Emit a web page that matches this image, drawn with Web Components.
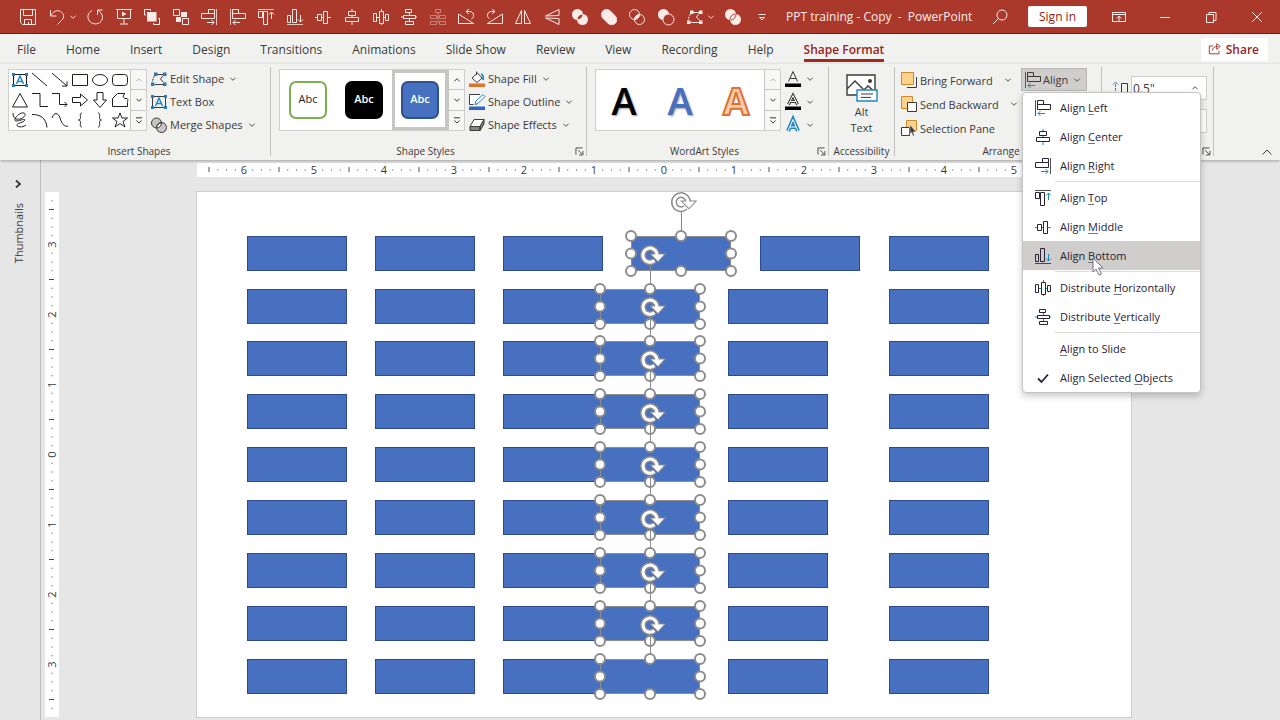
<!DOCTYPE html>
<html lang="en">
<head>
<meta charset="utf-8">
<title>PPT training - Copy - PowerPoint</title>
<style>
    body {
        margin: 0;
        height: 100vh;
        overflow: hidden;
        font-family: "Open Sans", "Noto Sans", sans-serif;
        font-size: 12px;
        color: #3b3a39;
        background: #e6e6e6;
    }
</style>
</head>
<body>
<ppt-app></ppt-app>

<script>
const BASE = `
    * { box-sizing: border-box; }
    button {
        display: flex;
        align-items: center;
        margin: 0;
        padding: 0;
        border: 0;
        background: none;
        font: inherit;
        color: inherit;
        white-space: nowrap;
    }
`;

class BaseElement extends HTMLElement {
    constructor() {
        super();
        this.shadow = this.attachShadow({mode: 'open'});
    }
    connectedCallback() {
        this.shadow.innerHTML = `<style>${BASE}</style>` + this.render();
    }
}

// all icons sit on a 16 x 16 grid, "a" is the accent colour class
const ICONS = {
    save: '<path d="M.5 .5h15v15h-13l-2-2zM3.500 .5v6h9v-6M4.500 15.500v-5h7v5M8.500 13v2"/>',
    undo: '<path d="M1.500 1v6h6M1.500 7C4 2.500 8 .5 11.500 2.500c4 2.500 4 6 1 9L8.500 15.500"/>',
    redo: '<path d="M5 1.500C0 4 -.5 10.500 4 13.500s11 1 11.500-5C15.500 5 13.500 3 11 1.500M15.500 1h-5v5"/>',
    present: '<path d="M0 .5h16M1.500 .5v9h13v-9M8 9.500v5M4 15h8"/><path class="f" d="M6 2.500v5L10.500 5z"/>',
    forward: '<path class="f" d="M3 3h9.500v9.500H3z"/><path d="M2 6H.5V.5h6V2M14 9.500h1.500v6h-6V14"/>',
    group: '<path d="M.5 .5h6v6h-6zM9.500 9.500h6v6h-6z"/><path class="f" d="M8 3h6v5H8zM3 8h5v5H3z"/>',
    alignLeft: '<path class="s" d="M.5 0v16"/><path d="M2.500 .5h6v4h-6zM2.500 4.500h13v5h-13z"/><path class="a" d="M3 13.500h7M5.500 11l-2.500 2.500L5.500 16"/>',
    alignRight: '<path class="s" d="M15.500 0v16"/><path d="M7.500 .5h6v4h-6zM.5 4.500h13v5H.5z"/><path class="a" d="M13 13.500H6M10.500 11l2.500 2.500-2.500 2.500"/>',
    alignTop: '<path class="s" d="M0 .5h16"/><path d="M.5 2.500h4v6h-4zM5.500 2.500h4v13h-4z"/><path class="a" d="M13.500 10V3M11 5.500l2.500-2.500L16 5.500"/>',
    alignBottom: '<path class="s" d="M0 15.500h16"/><path d="M.5 6.500h3v7h-3zM5.500 .5h4v13h-4z"/><path class="a" d="M13.500 6v7M11 10.500l2.500 2.500 2.500-2.500"/>',
    alignMiddle: '<path d="M2.500 5.500h4v6h-4zM8.500 2.500h4v12h-4z"/><path class="a" d="M0 8.500h2M7 8.500h1M13 8.500h3"/>',
    alignCenter: '<path d="M4.500 2.500h7v4h-7zM1.500 8.500h13v4h-13z"/><path class="a" d="M8 0v2M8 7v1M8 13v3"/>',
    distH: '<path d="M.5 4.500h3v8h-3zM6.500 2.500h4v12h-4zM12.500 5.500h3v6h-3z"/><path class="a" d="M4 8.500h2M11 8.500h1M8.500 0v2M8.500 15v1"/>',
    distV: '<path d="M4.500 .5h6v3h-6zM2.500 6.500h12v3h-12zM4.500 12.500h8v3h-8z"/><path class="a" d="M8.500 4v2M8.500 10v2M0 8h2M15 8h1"/>',
    org: '<g opacity=".4"><path d="M5.500 .5h5v3h-5zM.5 6.500h6v3h-6zM9.500 6.500h6v3h-6zM.5 12.500h6v3h-6zM9.500 12.500h6v3h-6zM8 4v10M7 8h2"/></g>',
    rotLeft: '<path d="M.5 5v9.500h15zM11 0L8 2.500 11 5M8 2.500h3.500c3 0 4 2 4 4s-1 3-2 3.500"/>',
    rotRight: '<path d="M15.500 5v9.500H.5zM5 0l3 2.500L5 5M8 2.500H4.500C1.500 2.500 .5 4.500 .5 6.500S1.500 9 2.500 9.500"/>',
    flipH: '<path d="M6.500 1.500v13h-6zM9.500 1.500v13h6z"/>',
    flipV: '<path d="M15 .5v6L1.500 7zM15 15.500v-6L1.500 9z"/>',
    intersect: '<circle class="f" cx="5.500" cy="5.500" r="5.500"/><circle class="f" cx="10.500" cy="10.500" r="5.500"/><path style="fill:#ab392b;stroke:none" d="M5.500 10.500a5 5 0 0 1 5-5 5 5 0 0 1-5 5z"/>',
    union: '<path class="f" d="M9.500 1.700a5.500 5.500 0 1 0-7.800 7.800l5 5a5.500 5.500 0 1 0 7.800-7.800z"/>',
    combine: '<circle cx="5.500" cy="5.500" r="5"/><circle cx="10.500" cy="10.500" r="5"/><path class="f" d="M5.500 10.500a5 5 0 0 1 5-5 5 5 0 0 1-5 5z"/>',
    subtract: '<circle class="f" cx="5.500" cy="5.500" r="5.500"/><circle cx="10.500" cy="10.500" r="5.500" style="fill:#ab392b"/>',
    fragment: '<circle class="f" cx="5.500" cy="5.500" r="5.500"/><circle class="f" cx="10.500" cy="10.500" r="5.500"/><path style="stroke:#ab392b" d="M5 10.500a5.500 5.500 0 0 1 5.500-5.500M11 5.500A5.500 5.500 0 0 1 5.500 11"/>',
    editPoints: '<path d="M6 3.500h6M12 4.500L9.500 8l3 3.500M4 13.500h8" /><path d="M3.500 5C2 7 1.500 9 1.500 11" stroke-dasharray="2 1"/><path class="af" d="M3 1.500h3.500V5H3zM12 1.500h3.500V5H12zM0 11.500h3.500V15H0zM12 11.500h3.500V15H12z"/>',
    more: '<path d="M4.500 5.500h7M5.500 8.500h5L8 11z"/>',
    search: '<circle cx="10" cy="6" r="5"/><path d="M6.500 9.500L1 15"/>',
    ribbonMode: '<path d="M1.500 3.500h13v9h-13zM1.500 5.500h13M8 12V7M5.500 9.500L8 7l2.500 2.500"/>',
    minimize: '<path d="M3 8.500h10"/>',
    restore: '<path d="M3.500 5.500h7v8h-7zM6 5.500v-2h7v8h-2.500"/>',
    close: '<path d="M3 3l10 10M13 3L3 13"/>',
    share: '<path d="M6 4.500H1.500v9h11V10M5 10c.5-3.500 2.500-5 6-5M10 2l4 3-4 3.500z"/>',
    down: '<path d="M5 6.500l3 3 3-3"/>',
    up: '<path d="M5 9.500l3-3 3 3"/>',
    expand: '<path d="M4.500 5.500h7M5 8.500l3 3 3-3"/>',
    collapse: '<path d="M3.500 10.500l4.500-4.500 4.500 4.500"/>',
    pane: '<path d="M6 4.500l4 3.500-4 3.500" stroke-width="1.800"/>',
    launch: '<path d="M4.500 12V4.500H12M7 7l5 5M12.500 8v4.500H8"/>',
    check: '<path d="M3 8.500l3.500 3.500L13 4.500" stroke-width="1.800"/>',
    none: '',
    textBox: '<path d="M1.500 2.500h13v11h-13z"/><path class="a" d="M4.500 12L8 4l3.500 8M5.800 9.500h4.400" stroke-width="1.400"/><path class="af" d="M0 1h3v3H0zM13 1h3v3h-3zM0 12h3v3H0zM13 12h3v3h-3z"/>',
    line: '<path d="M0 1l15 13"/>',
    arrowLine: '<path d="M0 1l15 13M15 9.500V14h-5"/>',
    rect: '<path d="M.5 2.500h15v11H.5z"/>',
    oval: '<ellipse cx="8" cy="8" rx="7.500" ry="5.500"/>',
    round: '<rect x=".5" y="2.500" width="15" height="11" rx="3"/>',
    triangle: '<path d="M8 1.500L15.500 15H.5z"/>',
    elbow: '<path d="M0 1.500h8v13h8"/>',
    elbowArrow: '<path d="M0 1.500h7.500v11H15M12.500 10l2.500 2.500-2.500 2.500"/>',
    arrowRight: '<path d="M.5 5.500h8v-3.500L15.500 8l-7 6v-3.500h-8z"/>',
    arrowDown: '<path d="M5 .5h6v7.500h3.500L8 15.500 1.500 8H5z"/>',
    freeform: '<path d="M5.500 1.500H13c-3 2-2 5 1 5s1.500 2 1.500 4v4h-15v-8z"/>',
    scribble: '<path d="M1 1c0 5 3 7 7 6s7-5 4-6-8 3-9 6 3 2 6 1 5-1 3 1-7 2-7 4 5 3 9 0"/>',
    arc: '<path d="M0 2.500c8 0 14 3 15 13"/>',
    curve: '<path d="M0 6c2-6 6-6 8 0s4 9 8 8"/>',
    braceL: '<path d="M10 1C7.500 1 8.500 4 8.500 5.500S8 8 6.500 8C8 8 8.500 9 8.500 10.500S7.500 15 10 15"/>',
    braceR: '<path d="M6 1c2.500 0 1.500 3 1.500 4.500S8 8 9.500 8C8 8 7.500 9 7.500 10.500S8.500 15 6 15"/>',
    star: '<path d="M8 1l2 5h5.500L11 9.500l2 5.500-5-3.500L3 15l2-5.500L.5 6H6z"/>',
    merge: '<circle cx="5.500" cy="6" r="5" style="fill:#c8c6c4"/><circle cx="10.500" cy="10.500" r="5" style="fill:#c8c6c4"/><path style="fill:#f1f1f0" d="M5.500 11a5 5 0 0 1 5-5 5 5 0 0 1-5 5z"/>',
    fill: '<path style="fill:#dd7230;stroke:none" d="M0 12.500h16V16H0z"/><path style="fill:#fff" d="M3 7l5.500-5 4.500 5-5 4.500zM7.500 4V.5"/><path class="a" d="M12 3c2 .5 2.500 3 2 6" stroke-width="1.800"/>',
    outline: '<path style="fill:#2f66c4;stroke:none" d="M0 12.500h16V16H0z"/><path style="fill:#fff" d="M11 .5H.5v10h4"/><path class="a" d="M14 .5l2 2-7 7-3 1 1-3.500z" style="fill:#fff"/>',
    effects: '<path style="fill:#fff" d="M5 2.500h10L11 9.500H1z"/><path style="fill:#8a8886" d="M1 9.500h10v4H1zM11 9.500l4-7v4.500l-4 6.500z"/>',
    bringFwd: '<path d="M6 15.500h9.500V5"/><path style="fill:#fcd189;stroke:#d08a2e" d="M.5 .5h12v12H.5z"/>',
    sendBack: '<path style="fill:#fcd189;stroke:#d08a2e" d="M.5 .5h11v12H.5z"/><path style="fill:#fff" d="M6.500 6.500h9v9h-9z"/>',
    selPane: '<path style="fill:#fcd189;stroke:#d08a2e" d="M5.500 .5h10v10h-10z"/><path style="fill:#fff" d="M.5 7.500h8v8h-8z"/><path style="fill:#3b3a39;stroke:#fff;stroke-width:.5" d="M9 4.500l6 7.500h-3l1.500 3.500-1.500 .5-1.500-3.500L9 14z"/>',
    height: '<path class="a" d="M3.500 15V2M1 4.500L3.500 2 6 4.500" stroke-dasharray="3 1"/><path d="M9.500 3.500h6V16h-6z"/>',
    textFill: '<path d="M3.500 10.500L8 .5l4.500 10M5 7.500h6"/><path class="k" d="M0 12.500h16V16H0z"/>',
    textOutline: '<path d="M3.500 10.500L8 1.500l4.500 9M5.500 7.500h5" stroke-width="3"/><path d="M3.500 10.500L8 1.500l4.500 9M5.500 7.500h5" style="stroke:#fff"/><path class="k" d="M0 12.500h16V16H0z"/>',
    textEffects: '<path class="a" d="M3 14L8 2.500 13 14M5 10h6" stroke-width="4"/><path d="M3 14L8 2.500 13 14M5 10h6" style="stroke:#fff"/>',
    altText: '<path style="fill:#fff" stroke-width=".7" d="M.5 1.500h14v10H.5zM.5 8.500l4-4 4.500 4.500 2-2 3.500 3"/><circle cx="12" cy="4.500" r=".5"/><path class="a" style="fill:#fff" stroke-width=".7" d="M5.500 9h10v5.500h-10z"/><path d="M7.500 11h6M7.500 12.700h5" stroke-width=".5"/>'
};

class UiIcon extends BaseElement {
    render() {
        const size = this.getAttribute('size') || 16;
        return `
        <style>
        :host { display: inline-flex; flex: none; }
        svg { fill: none; stroke: currentColor; overflow: visible; }
        .a { stroke: var(--accent, #1f86c4); }
        .s { opacity: .8; }
        .f { fill: currentColor; stroke: none; }
        .af { fill: var(--accent, #2a7ab5); stroke: none; }
        .k { fill: #000; stroke: none; }
        </style>
        <svg width="${size}" height="${size}" viewBox="0 0 16 16" aria-hidden="true">${ICONS[this.getAttribute('name')]}</svg>
        `;
    }
}
customElements.define('ui-icon', UiIcon);

class TitleBar extends BaseElement {
    render() {
        const tools = ['save', 'undo', 'redo', 'present', 'forward', 'group', 'alignRight', 'alignLeft', 'alignTop',
            'alignBottom', 'alignMiddle', 'alignCenter', 'distH', 'distV', 'org', 'rotLeft', 'rotRight', 'flipH',
            'flipV', 'intersect', 'union', 'combine', 'subtract', 'editPoints', 'fragment', 'more'];
        const menus = ['undo', 'editPoints'];
        return `
        <style>
        :host {
            display: flex;
            align-items: center;
            height: 34px;
            background: #ab392b;
            border-bottom: 1px solid #86190f;
            color: #fdebe8;
            --accent: currentColor;
        }
        .tools {
            display: flex;
            justify-content: space-between;
            width: 750px;
            margin-left: 20px;
        }
        .drop { margin: 0 -5px 0 1px; }
        .title { margin-left: 16px; white-space: pre; font-size: 12px; }
        .right { display: flex; align-items: center; margin-left: auto; gap: 30px; padding-right: 15px; }
        .sign {
            padding: 0 11px;
            margin: 0 -6px 0 -10px;
            height: 21px;
            border-radius: 2px;
            background: #fff;
            color: #8c1f14;
        }
        </style>
        <div class="tools">
            ${tools.map(t => `<button aria-label="${t}"><ui-icon name="${t}"></ui-icon>${menus.includes(t) ? '<ui-icon class="drop" name="down" size="14"></ui-icon>' : ''}</button>`).join('')}
        </div>
        <div class="title">PPT training - Copy  -  PowerPoint</div>
        <div class="right">
            <button aria-label="Search"><ui-icon name="search"></ui-icon></button>
            <button class="sign">Sign in</button>
            <button aria-label="Ribbon display"><ui-icon name="ribbonMode"></ui-icon></button>
            <button aria-label="Minimize"><ui-icon name="minimize"></ui-icon></button>
            <button aria-label="Restore"><ui-icon name="restore"></ui-icon></button>
            <button aria-label="Close"><ui-icon name="close"></ui-icon></button>
        </div>
        `;
    }
}
customElements.define('title-bar', TitleBar);

class TabStrip extends BaseElement {
    render() {
        const tabs = ['File', 'Home', 'Insert', 'Design', 'Transitions', 'Animations', 'Slide Show', 'Review', 'View',
            'Recording', 'Help', 'Shape Format'];
        return `
        <style>
        :host {
            display: flex;
            align-items: center;
            height: 30px;
            padding: 0 12px 0 17px;
            background: #f1f1f0;
        }
        nav { display: flex; gap: 30px; }
        nav button { height: 22px; margin-top: 3px; border-bottom: 3px solid transparent; }
        nav .on { color: #99241a; border-color: #a4261d; font-weight: 600; }
        .share {
            margin-left: auto;
            gap: 4px;
            height: 23px;
            padding: 0 9px 0 7px;
            background: #fff;
            border-radius: 2px;
            color: #99241a;
            font-weight: 600;
        }
        </style>
        <nav>${tabs.map(t => `<button${t === 'Shape Format' ? ' class="on"' : ''}>${t}</button>`).join('')}</nav>
        <button class="share"><ui-icon name="share" size="14"></ui-icon>Share</button>
        `;
    }
}
customElements.define('tab-strip', TabStrip);

class RibbonGroup extends BaseElement {
    render() {
        return `
        <style>
        :host {
            display: flex;
            flex-direction: column;
            position: relative;
            border-right: 1px solid #c3c1bf;
            height: 89px;
            flex: none;
        }
        .body { display: flex; flex: 1; align-items: flex-start; }
        .foot { display: flex; align-items: center; height: 10px; font-size: 10px; }
        .foot span { flex: 1; text-align: center; white-space: nowrap; }
        </style>
        <div class="body"><slot></slot></div>
        <div class="foot"><span>${this.getAttribute('label') || ''}</span>
        ${this.hasAttribute('launcher') ? '<button aria-label="More options"><ui-icon name="launch" size="14"></ui-icon></button>' : ''}</div>
        `;
    }
}
customElements.define('ribbon-group', RibbonGroup);

class RibbonButton extends BaseElement {
    render() {
        return `
        <style>
        :host { display: block; }
        button { height: var(--row, 23px); gap: 3px; }
        .menu { margin-left: var(--menu-gap, -1px); }
        </style>
        <button><ui-icon name="${this.getAttribute('icon')}"></ui-icon><slot></slot>${this.hasAttribute('menu') ? '<ui-icon class="menu" name="down" size="14"></ui-icon>' : ''}</button>
        `;
    }
}
customElements.define('ribbon-button', RibbonButton);

class UiGallery extends BaseElement {
    render() {
        const first = this.hasAttribute('top') ? 'opacity:.35' : '';
        return `
        <style>
        :host {
            display: flex;
            height: 62px;
            background: #fff;
            border: 1px solid #d0cecc;
            color: #201f1e;
        }
        .items { display: flex; flex: 1; }
        .scroll { display: flex; flex-direction: column; width: 16px; border-left: 1px solid #c8c6c4; background: #f7f7f6; }
        .scroll button { flex: 1; justify-content: center; }
        .scroll button + button { border-top: 1px solid #c8c6c4; }
        </style>
        <div class="items"><slot></slot></div>
        <div class="scroll">
            <button aria-label="Up" style="${first}"><ui-icon name="up" size="14"></ui-icon></button>
            <button aria-label="Down"><ui-icon name="down" size="14"></ui-icon></button>
            <button aria-label="More"><ui-icon name="expand" size="14"></ui-icon></button>
        </div>
        `;
    }
}
customElements.define('ui-gallery', UiGallery);

class AlignMenu extends BaseElement {
    render() {
        const items = [
            ['alignLeft', 'Align <u>L</u>eft'],
            ['alignCenter', 'Align <u>C</u>enter'],
            ['alignRight', 'Align <u>R</u>ight'],
            null,
            ['alignTop', 'Align <u>T</u>op'],
            ['alignMiddle', 'Align <u>M</u>iddle'],
            ['alignBottom', 'Align <u>B</u>ottom'],
            null,
            ['distH', 'Distribute <u>H</u>orizontally'],
            ['distV', 'Distribute <u>V</u>ertically'],
            null,
            ['none', '<u>A</u>lign to Slide'],
            ['check', 'Align Selected <u>O</u>bjects']
        ];
        return `
        <style>
        :host {
            display: block;
            width: 179px;
            background: #fff;
            border: 1px solid #c6c4c2;
            border-radius: 4px;
            box-shadow: 0 3px 7px rgba(0, 0, 0, .22);
            color: #2b2233;
        }
        button { width: 100%; height: 29px; gap: 9px; padding-left: 12px; }
        .on { background: #d0cecc; }
        hr { margin: 1px 0 1px 32px; border: 0; border-top: 1px solid #dddbd9; }
        u { text-underline-offset: 2px; text-decoration-color: #77737a; }
        .pointer { position: absolute; left: 69px; top: 164px; }
        </style>
        <div role="menu">
            ${items.map(i => i ? `<button role="menuitem"${i[0] === 'alignBottom' ? ' class="on"' : ''}><ui-icon name="${i[0]}"></ui-icon><span>${i[1]}</span></button>` : '<hr>').join('')}
        </div>
        <svg class="pointer" width="13" height="19" viewBox="0 0 13 19"><path d="M1 1v14l3-3 3 6 2.500-1-3-6H11z" fill="#fff" stroke="#77737a"/></svg>
        `;
    }
}
customElements.define('align-menu', AlignMenu);

class RibbonBar extends BaseElement {
    render() {
        const shapes = ['textBox', 'line', 'arrowLine', 'rect', 'oval', 'round', 'triangle', 'elbow', 'elbowArrow',
            'arrowRight', 'arrowDown', 'freeform', 'scribble', 'arc', 'curve', 'braceL', 'braceR', 'star'];
        return `
        <style>
        :host {
            display: flex;
            position: relative;
            z-index: 1;
            padding: 3px 8px 4px;
            background: #f1f1f0;
            box-shadow: 0 1px 3px rgba(0, 0, 0, .3);
            font-size: 11px;
        }
        ui-gallery { margin-top: 2px; }
        .col { display: flex; flex-direction: column; }
        .shapes { display: grid; grid-template-columns: repeat(6, 20px); align-items: center; justify-items: center; margin-left: 1px; }
        .tile { display: flex; align-items: center; justify-content: center; width: 56px; height: 100%; }
        .tile span {
            width: 38px;
            height: 38px;
            border-radius: 7px;
            border: 2px solid #7ab04f;
            text-align: center;
            line-height: 31px;
            font-size: 11px;
        }
        .tile .black { background: #000; border-color: #000; color: #fff; font-weight: 600; }
        .tile .blue { background: #4770c0; border-color: #2f528f; color: #fff; font-weight: 600; }
        .tile.on { border: 3px solid #c8c6c4; }
        .wa { width: 56px; justify-content: center; font-size: 38px; font-weight: 600; line-height: 60px; color: #000; text-shadow: 1px 1px 2px #999; }
        .wa.blue { color: #4770c0; }
        .wa.orange { color: #f8cbad; -webkit-text-stroke: 2px #dd7230; text-shadow: none; font-weight: 700; }
        .alt { flex-direction: column; width: 66px; margin-top: 5px; line-height: 16px; }
        .anchor { position: relative; }
        .align { height: 23px; width: 66px; margin-top: 1px; padding-left: 3px; gap: 2px; background: #d0cecc; border: 1px solid #b9b7b5; }
        align-menu { position: absolute; left: 1px; top: 25px; z-index: 3; }
        .size { display: flex; gap: 3px; align-items: center; height: 24px; }
        .box { display: flex; align-items: center; width: 76px; height: 24px; background: #fff; border: 1px solid #d0cecc; }
        input { width: 56px; border: 0; padding: 0 0 0 1px; font: inherit; font-size: 12px; color: #3b3a39; background: none; }
        .collapse { position: absolute; right: 5px; bottom: 0; }
        </style>
        <ribbon-group label="Insert Shapes" style="width:263px">
            <ui-gallery top>
                <div class="shapes">${shapes.map(s => `<ui-icon name="${s}"></ui-icon>`).join('')}</div>
            </ui-gallery>
            <div class="col" style="margin-left:4px">
                <ribbon-button icon="editPoints" menu>Edit Shape</ribbon-button>
                <ribbon-button icon="textBox">Text Box</ribbon-button>
                <ribbon-button icon="merge" menu>Merge Shapes</ribbon-button>
            </div>
        </ribbon-group>
        <ribbon-group label="Shape Styles" launcher style="width:316px;padding-left:8px">
            <ui-gallery>
                <button class="tile"><span>Abc</span></button>
                <button class="tile"><span class="black">Abc</span></button>
                <button class="tile on"><span class="blue">Abc</span></button>
            </ui-gallery>
            <div class="col" style="margin-left:4px">
                <ribbon-button icon="fill" menu>Shape Fill</ribbon-button>
                <ribbon-button icon="outline" menu>Shape Outline</ribbon-button>
                <ribbon-button icon="effects" menu>Shape Effects</ribbon-button>
            </div>
        </ribbon-group>
        <ribbon-group label="WordArt Styles" launcher style="width:242px;padding-left:8px">
            <ui-gallery top>
                <button class="wa">A</button>
                <button class="wa blue">A</button>
                <button class="wa orange">A</button>
            </ui-gallery>
            <div class="col" style="margin-left:4px">
                <ribbon-button icon="textFill" menu></ribbon-button>
                <ribbon-button icon="textOutline" menu></ribbon-button>
                <ribbon-button icon="textEffects" menu></ribbon-button>
            </div>
        </ribbon-group>
        <ribbon-group label="Accessibility" style="width:66px">
            <button class="alt"><ui-icon name="altText" size="32"></ui-icon><span>Alt</span><span>Text</span></button>
        </ribbon-group>
        <ribbon-group label="Arrange" style="width:207px;padding-left:6px;--row:24px">
            <div class="col" style="width:120px;margin-top:1px">
                <ribbon-button icon="bringFwd" menu style="--menu-gap:5px">Bring Forward</ribbon-button>
                <ribbon-button icon="sendBack" menu style="--menu-gap:5px">Send Backward</ribbon-button>
                <ribbon-button icon="selPane">Selection Pane</ribbon-button>
            </div>
            <div class="anchor">
                <button class="align" aria-haspopup="menu"><ui-icon name="alignLeft"></ui-icon>Align<ui-icon name="down" size="14"></ui-icon></button>
                <align-menu></align-menu>
            </div>
        </ribbon-group>
        <ribbon-group launcher style="width:112px;padding-left:10px">
            <div class="col" style="gap:9px;margin-top:9px">
                <div class="size"><ui-icon name="height"></ui-icon><label class="box"><input type="text" aria-label="Shape height" value='0.5"'><ui-icon name="up" size="14"></ui-icon></label></div>
                <div class="size"><ui-icon name="none"></ui-icon><label class="box"><input type="text" aria-label="Shape width"></label></div>
            </div>
        </ribbon-group>
        <button class="collapse" aria-label="Collapse the ribbon"><ui-icon name="collapse"></ui-icon></button>
        `;
    }
}
customElements.define('ribbon-bar', RibbonBar);

// ruler with one number every 70 units, counted from the middle
class SlideRuler extends BaseElement {
    render() {
        const vertical = this.hasAttribute('vertical');
        const half = vertical ? 262 : 467;
        let marks = '';
        for (let i = -52; i <= 47; i++) {
            const at = i * 70 / 8;
            if (Math.abs(at) > half - 5) continue;
            if (i % 8 === 0) {
                const n = Math.abs(i / 8);
                marks += vertical
                    ? `<text transform="translate(11 ${at}) rotate(-90)">${n}</text>`
                    : `<text x="${at}" y="11">${n}</text>`;
            } else if (i % 4 === 0) {
                marks += vertical ? `<path d="M4 ${at}h5"/>` : `<path d="M${at} 4v5"/>`;
            } else {
                marks += vertical ? `<path class="dot" d="M6 ${at}h2"/>` : `<path class="dot" d="M${at} 6v2"/>`;
            }
        }
        return `
        <style>
        :host { display: block; background: #fff; min-width: 0; min-height: 0; }
        svg { display: block; width: 100%; height: 100%; stroke: #4a4846; }
        .dot { stroke: #a19f9d; }
        text { font-size: 11px; text-anchor: middle; fill: #3b3a39; stroke: none; }
        </style>
        <svg viewBox="${vertical ? '0 -262 14 524' : '-467 0 934 14'}">${marks}</svg>
        `;
    }
}
customElements.define('slide-ruler', SlideRuler);

class SlideCanvas extends BaseElement {
    render() {
        const W = 100;
        const H = 35;
        const tops = [44, 97, 149, 202, 255, 308, 361, 414, 467];
        let shapes = '';
        let frames = '';
        tops.forEach((y, row) => {
            const x4 = row === 0 ? 434 : 403;
            const x5 = row === 0 ? 563 : 531;
            [50, 178, 306, x4, x5, 692].forEach(x => {
                shapes += `<rect class="shape" x="${x}.5" y="${y}.5" width="${W - 1}" height="${H - 1}"/>`;
            });
            frames += this.frame(x4, y, W, H);
        });
        return `
        <style>
        :host { display: block; }
        svg { display: block; width: 100%; background: #fff; outline: 1px solid #cfcfcf; }
        .shape { fill: #4770c0; stroke: #2c4a8c; }
        .frame, .stalk { fill: none; stroke: #8c8c8c; }
        .knob { fill: #fff; stroke: #8c8c8c; stroke-width: 2; }
        .ring { fill: none; stroke: #8c8c8c; stroke-width: 6; }
        .ring.in { stroke: #fff; stroke-width: 3; }
        .tip { fill: #fff; stroke: #8c8c8c; stroke-width: 2; }
        .tip.in { stroke: none; }
        </style>
        <svg viewBox="0 0 934 525" role="img" aria-label="Slide">${shapes}${frames}</svg>
        `;
    }
    frame(x, y, w, h) {
        const cx = x + w / 2;
        const points = [[x, y], [cx, y], [x + w, y], [x, y + h / 2], [x + w, y + h / 2], [x, y + h], [cx, y + h], [x + w, y + h]];
        const arc = 'M7 0A7 7 0 1 0 4.500 5.500';
        const tip = 'M1.500 -.5H14L8 6z';
        return `
        <rect class="frame" x="${x}.5" y="${y}.5" width="${w - 1}" height="${h - 1}"/>
        <path class="stalk" d="M${cx}.5 ${y}v-26"/>
        ${points.map(p => `<circle class="knob" cx="${p[0]}" cy="${p[1]}" r="5"/>`).join('')}
        <g transform="translate(${cx} ${y - 34})">
            <path class="ring" d="${arc}"/>
            <path class="tip" d="${tip}"/>
            <path class="ring in" d="${arc}"/>
            <path class="tip in" d="${tip}"/>
        </g>`;
    }
}
customElements.define('slide-canvas', SlideCanvas);

class ThumbnailPane extends BaseElement {
    render() {
        return `
        <style>
        :host {
            display: flex;
            flex-direction: column;
            align-items: center;
            gap: 11px;
            width: 41px;
            padding: 16px 4px 0 0;
            border-right: 1px solid #bdbdbd;
            font-size: 11px;
        }
        span { writing-mode: vertical-rl; transform: rotate(180deg); }
        </style>
        <button aria-label="Expand thumbnails"><ui-icon name="pane"></ui-icon></button>
        <span>Thumbnails</span>
        `;
    }
}
customElements.define('thumbnail-pane', ThumbnailPane);

class PptApp extends BaseElement {
    render() {
        return `
        <style>
        :host { display: flex; flex-direction: column; min-height: 100vh; }
        .work { display: flex; flex: 1; }
        main {
            display: grid;
            flex: 1;
            grid-template-columns: 14px 138fr 934fr 149fr;
            grid-template-rows: 14px auto;
            row-gap: 15px;
            align-content: start;
            padding: 3px 0 0 4px;
        }
        .h { grid-column: 3; }
        .v { grid-column: 1; }
        .s { grid-column: 3; }
        </style>
        <title-bar></title-bar>
        <tab-strip></tab-strip>
        <ribbon-bar></ribbon-bar>
        <div class="work">
            <thumbnail-pane></thumbnail-pane>
            <main>
                <slide-ruler class="h"></slide-ruler>
                <slide-ruler class="v" vertical></slide-ruler>
                <slide-canvas class="s"></slide-canvas>
            </main>
        </div>
        `;
    }
}
customElements.define('ppt-app', PptApp);
</script>
</body>
</html>
